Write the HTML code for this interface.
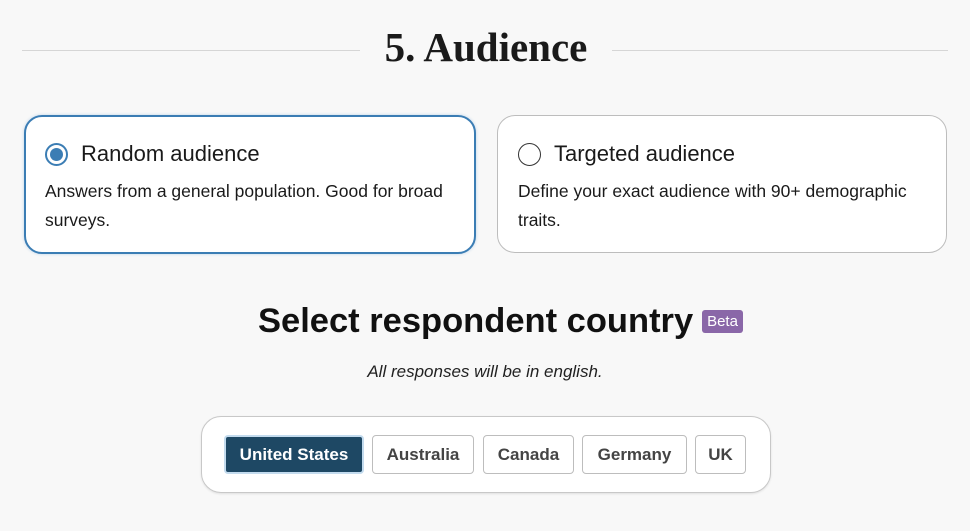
<!DOCTYPE html><html><head><style>
body{margin:0;width:970px;height:531px;background:#f8f8f8;font-family:"Liberation Sans",sans-serif;position:relative;overflow:hidden;color:#1a1a1a}
.a{position:absolute}
.line{position:absolute;top:50px;height:1px;background:#d6d6d6}
h1{position:absolute;left:0;width:972px;top:23px;margin:0;text-align:center;font:bold 41px "Liberation Serif",serif;color:#1a1a1a}
.card{position:absolute;background:#fff;border-radius:18px;box-sizing:border-box}
.radio{position:absolute;left:20px;top:27px;width:23px;height:23px;border-radius:50%;box-sizing:border-box}
.lbl{position:absolute;left:56px;top:25px;font-size:22px}
.desc{position:absolute;left:20px;top:61px;font-size:17.5px;line-height:29px;width:420px}
.btn{position:absolute;top:435px;height:39px;box-sizing:border-box;border:1px solid #bdbdbd;border-radius:4px;background:#fff;font-weight:bold;font-size:17px;color:#444;text-align:center;line-height:37px}
</style></head><body>
<div class="line" style="left:22px;width:338px"></div>
<div class="line" style="left:612px;width:336px"></div>
<h1>5. Audience</h1>
<div class="card" style="left:24px;top:115px;width:452px;height:139px;border:2px solid #3b7db4;box-shadow:0 0 3px #bcd4ea">
<div class="radio" style="border:2px solid #3b7db4;left:19px;top:26px"><div style="position:absolute;left:3px;top:3px;width:13px;height:13px;border-radius:50%;background:#3b7db4"></div></div>
<div class="lbl" style="left:55px;top:24px">Random audience</div>
<div class="desc" style="left:19px;top:60px">Answers from a general population. Good for broad surveys.</div>
</div>
<div class="card" style="left:497px;top:115px;width:450px;height:138px;border:1px solid #bdbdbd">
<div class="radio" style="border:1.5px solid #333"></div>
<div class="lbl">Targeted audience</div>
<div class="desc" style="width:400px">Define your exact audience with 90+ demographic traits.</div>
</div>
<div class="a" style="left:258px;top:302px;font-weight:bold;font-size:34.5px;color:#111;white-space:nowrap">Select respondent country</div>
<div class="a" style="left:702px;top:310px;width:41px;height:23px;background:#8a67a8;border-radius:3px;color:#fff;font-size:15px;line-height:23px;text-align:center">Beta</div>
<div class="a" style="left:0;width:970px;top:362px;text-align:center;font-style:italic;font-size:17px;color:#222">All responses will be in english.</div>
<div class="a" style="left:201px;top:416px;width:570px;height:77px;box-sizing:border-box;background:#fff;border:1px solid #c8c8c8;border-radius:20px;box-shadow:0 1px 2px rgba(0,0,0,.1)"></div>
<div class="btn" style="left:224px;width:140px;background:#1e4864;border:2px solid #c3dbee;color:#fff;line-height:35px">United States</div>
<div class="btn" style="left:372px;width:102px">Australia</div>
<div class="btn" style="left:483px;width:91px">Canada</div>
<div class="btn" style="left:582px;width:105px">Germany</div>
<div class="btn" style="left:695px;width:51px">UK</div>
</body></html>
